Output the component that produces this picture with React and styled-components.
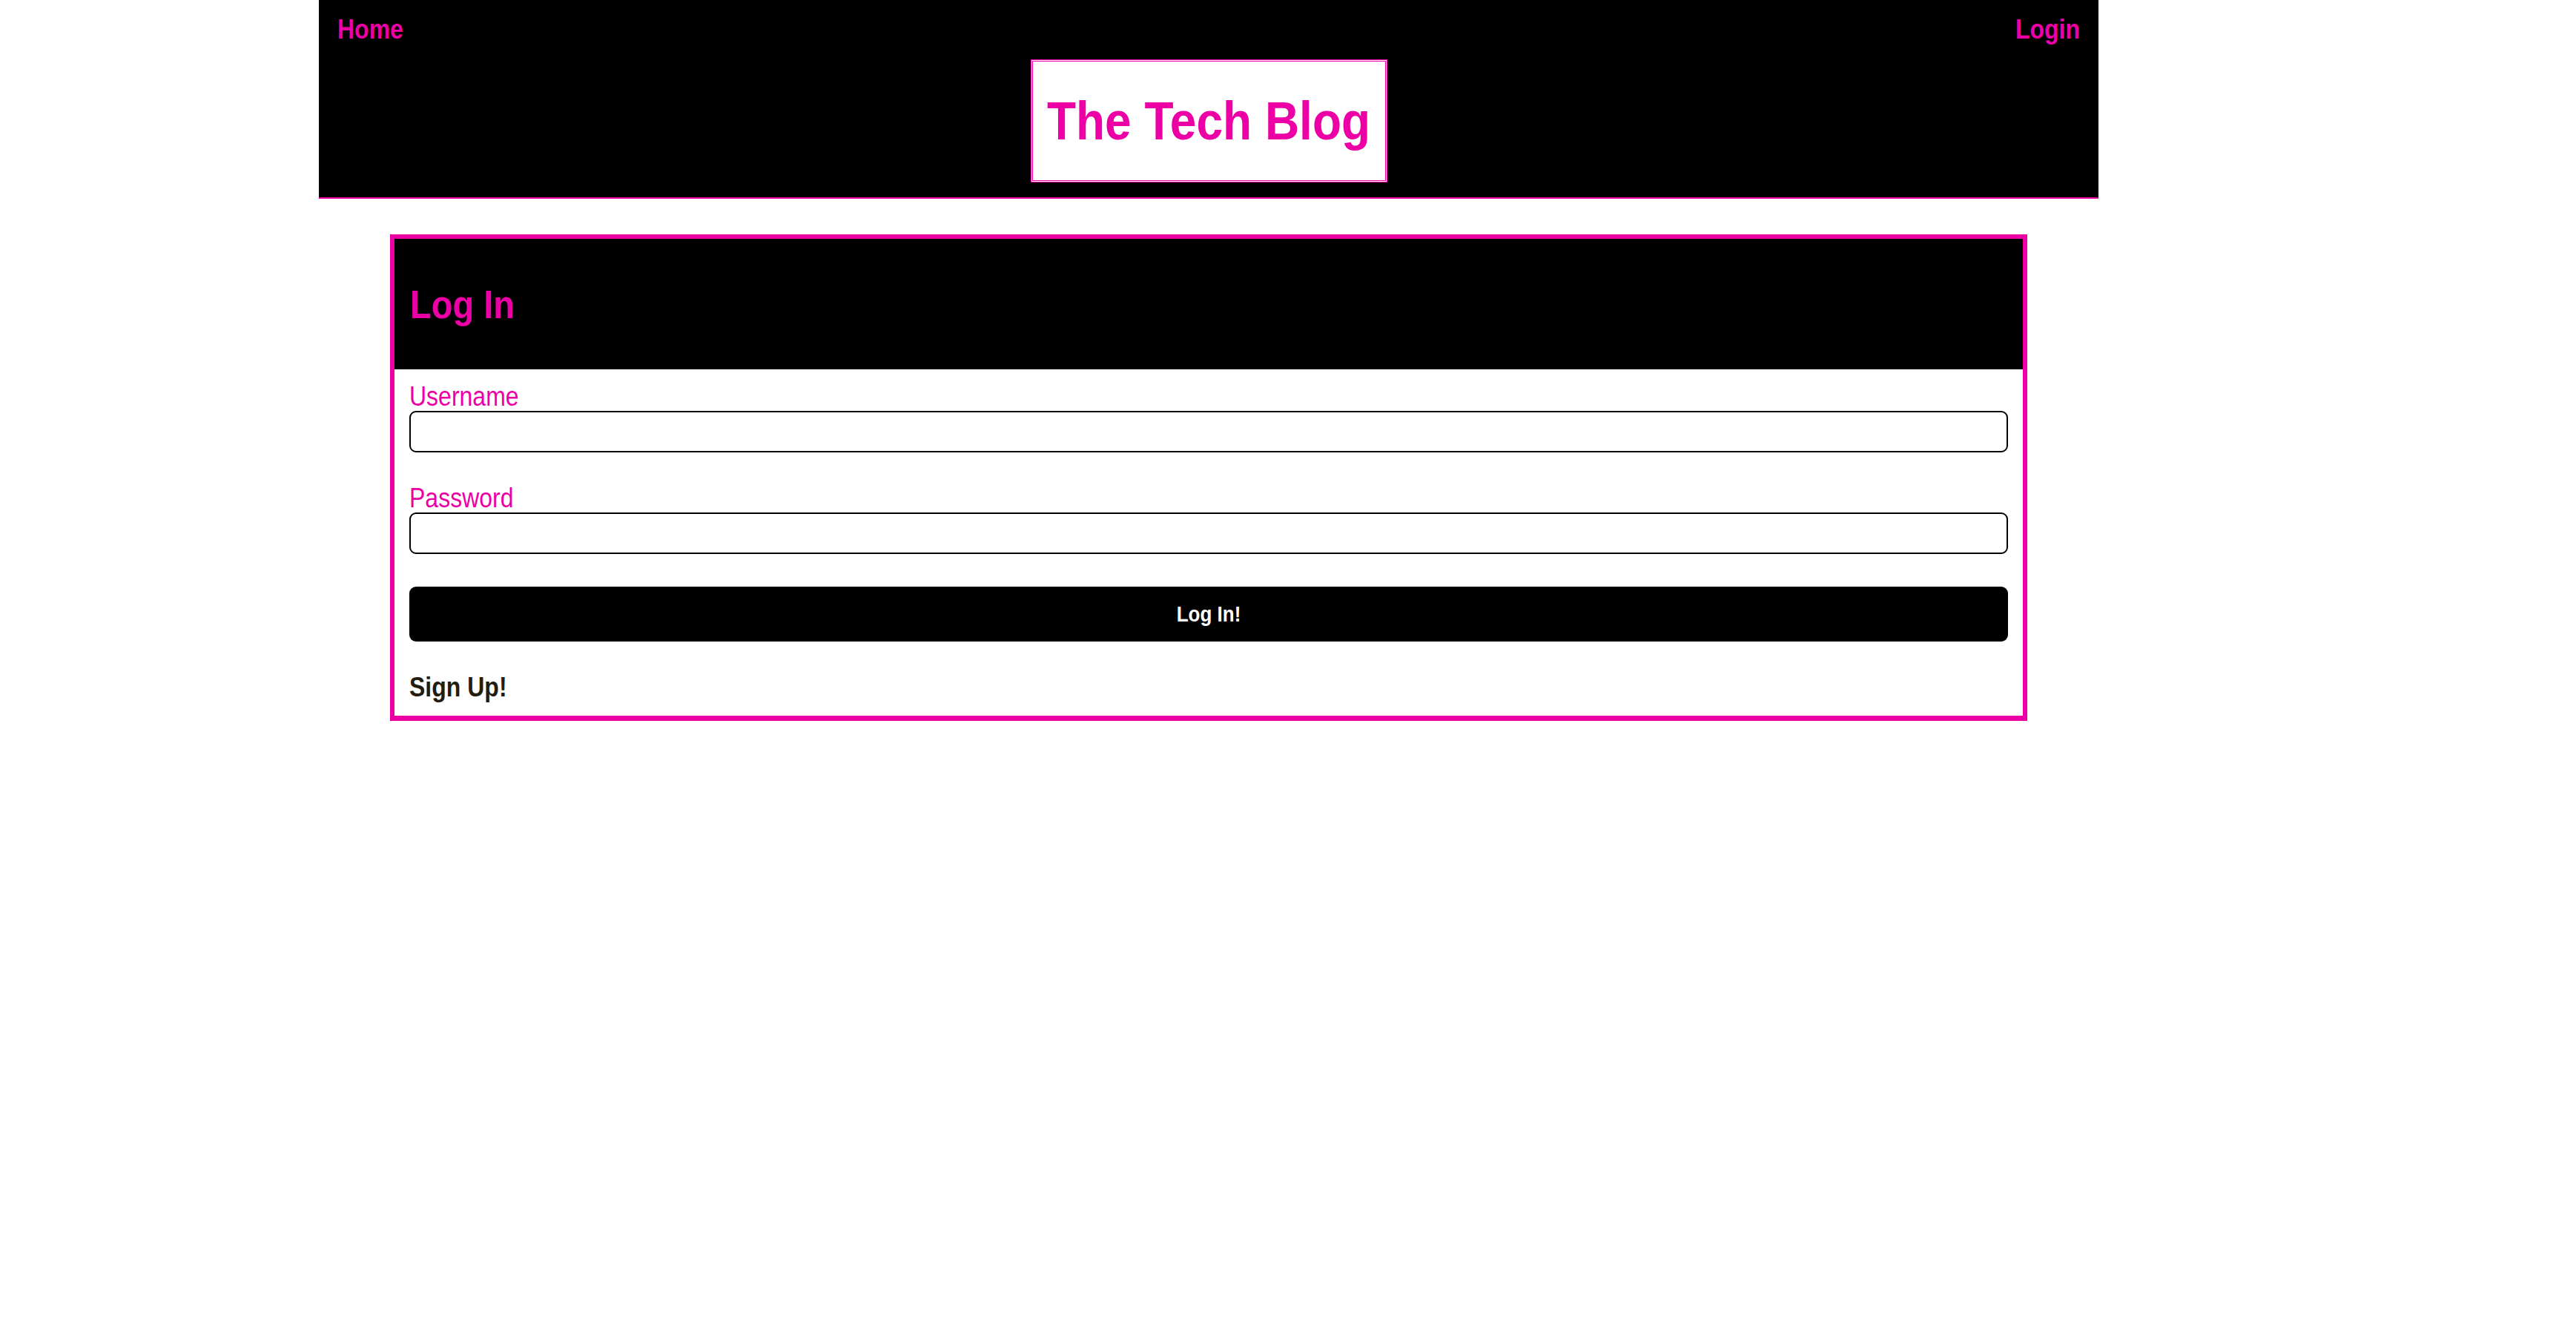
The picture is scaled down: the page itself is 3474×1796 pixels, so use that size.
import React from "react";
import styled, { createGlobalStyle, css } from "styled-components";

const PINK = "#ec00a6";

const GlobalStyle = createGlobalStyle`
  html, body {
    margin: 0;
    padding: 0;
    background: #ffffff;
  }
  body {
    font-family: "Liberation Sans", Helvetica, Arial, sans-serif;
  }
  *, *::before, *::after {
    box-sizing: border-box;
  }
`;

/* the reference text is drawn slightly taller than it is wide */
const tall = css`
  transform: scaleY(1.125);
  transform-origin: 50% 50%;
`;

const Page = styled.div`
  width: 2400px;
  margin-left: 430px;
`;

const Header = styled.header`
  background: #000000;
  border-bottom: 2px solid ${PINK};
  display: flex;
  flex-direction: column;
  align-items: center;
  padding-bottom: 20px;
`;

const Nav = styled.nav`
  align-self: stretch;
  height: 80px;
  padding: 0 25px;
  display: flex;
  justify-content: space-between;
  align-items: center;
`;

const NavLink = styled.a`
  display: inline-block;
  color: ${PINK};
  font-weight: 700;
  font-size: 32px;
  line-height: 32px;
  text-decoration: none;
  cursor: pointer;
  ${tall}
`;

const TitleBox = styled.div`
  width: 481px;
  height: 166px;
  background: #ffffff;
  border: 3px double ${PINK};
  display: flex;
  align-items: center;
  justify-content: center;
`;

const Title = styled.h1`
  margin: 0;
  font-size: 64px;
  line-height: 64px;
  font-weight: 700;
  color: ${PINK};
  ${tall}
`;

const Card = styled.section`
  width: 92%;
  margin: 48px auto 0;
  border-style: solid;
  border-color: ${PINK};
  border-width: 6px 6px 7px;
  background: #ffffff;
`;

const CardHeader = styled.div`
  height: 176px;
  background: #000000;
  display: flex;
  align-items: center;
  padding-left: 21px;
`;

const CardTitle = styled.h2`
  margin: 0;
  font-size: 47px;
  line-height: 47px;
  font-weight: 700;
  color: ${PINK};
  ${tall}
`;

const Form = styled.form`
  display: flex;
  flex-direction: column;
  padding: 18px 20px 18px;
`;

const FieldLabel = styled.label`
  display: block;
  height: 38px;
  line-height: 38px;
  font-size: 32px;
  color: ${PINK};
  ${tall}
`;

const TextInput = styled.input`
  display: block;
  width: 100%;
  height: 56px;
  margin: 0 0 ${(p) => p.$gap}px;
  padding: 0 10px;
  border: 2px solid #000000;
  border-radius: 9px;
  background: #ffffff;
  font-family: inherit;
  font-size: 27px;
  outline: none;
`;

const SubmitButton = styled.button`
  height: 74px;
  width: 100%;
  border: none;
  border-radius: 9px;
  background: #000000;
  color: #ffffff;
  font-family: inherit;
  font-weight: 700;
  font-size: 26px;
  display: flex;
  align-items: center;
  justify-content: center;
  cursor: pointer;
`;

const ButtonText = styled.span`
  display: inline-block;
  line-height: 26px;
  ${tall}
`;

const SignUpLink = styled.a`
  display: block;
  margin-top: 42px;
  height: 40px;
  line-height: 40px;
  font-size: 32px;
  font-weight: 700;
  color: #221d0e;
  text-decoration: none;
  cursor: pointer;
  ${tall}
`;

export default function App() {
  return (
    <>
      <GlobalStyle />
      <Page>
        <Header>
          <Nav>
            <NavLink>Home</NavLink>
            <NavLink>Login</NavLink>
          </Nav>
          <TitleBox>
            <Title>The Tech Blog</Title>
          </TitleBox>
        </Header>
        <Card>
          <CardHeader>
            <CardTitle>Log In</CardTitle>
          </CardHeader>
          <Form onSubmit={(e) => e.preventDefault()}>
            <FieldLabel htmlFor="username">Username</FieldLabel>
            <TextInput id="username" type="text" $gap={43} />
            <FieldLabel htmlFor="password">Password</FieldLabel>
            <TextInput id="password" type="password" $gap={44} />
            <SubmitButton type="submit">
              <ButtonText>Log In!</ButtonText>
            </SubmitButton>
            <SignUpLink>Sign Up!</SignUpLink>
          </Form>
        </Card>
      </Page>
    </>
  );
}
